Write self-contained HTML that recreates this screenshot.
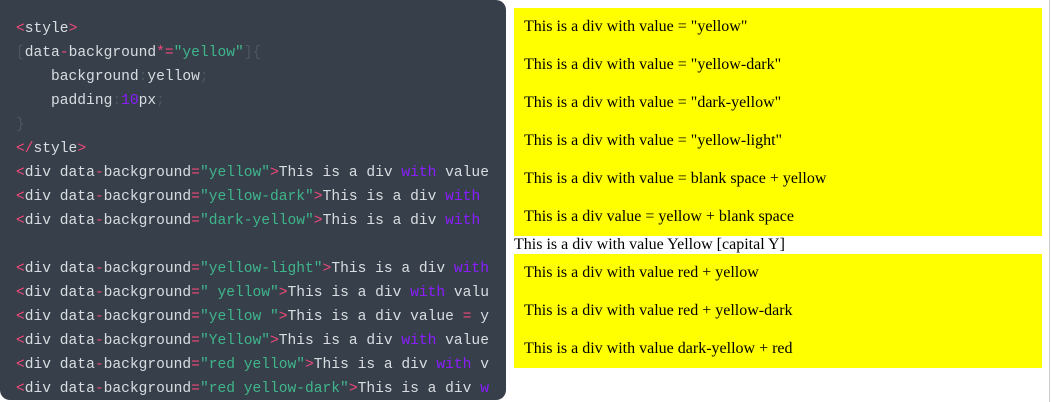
<!DOCTYPE html>
<html><head><style>
body{margin:0;width:1052px;height:402px;background:#fff;position:relative;overflow:hidden}
.code{position:absolute;left:0;top:0;width:506px;height:400px;background:#37404a;border-radius:0 10px 10px 10px;overflow:hidden}
pre{margin:0;position:absolute;left:16px;top:17px;font-family:"Liberation Mono",monospace;font-size:14.6px;line-height:24px;color:#d9dde2;white-space:pre}
.t{color:#f0487a}.s{color:#3fb58b}.k{color:#8a1cff}.d{color:#4d5560}
.right{position:absolute;left:514px;top:8px;width:528px;font-family:"Liberation Serif",serif;font-size:16px;line-height:18px;color:#000}
.y{background:#ff0;padding:10px}
.edge{position:absolute;left:1049px;top:0;width:1px;height:402px;background:#ccc}
</style></head><body>
<div class="code"><pre><span class="t">&lt;</span>style<span class="t">&gt;</span>
<span class="d">[</span>data<span class="t">-</span>background<span class="t">*=</span><span class="s">"yellow"</span><span class="d">]{</span>
    background<span class="d">:</span>yellow<span class="d">;</span>
    padding<span class="d">:</span><span class="k">10</span>px<span class="d">;</span>
<span class="d">}</span>
<span class="t">&lt;/</span>style<span class="t">&gt;</span>
<span class="t">&lt;</span>div data<span class="t">-</span>background<span class="t">=</span><span class="s">"yellow"</span><span class="t">&gt;</span>This is a div <span class="k">with</span> value
<span class="t">&lt;</span>div data<span class="t">-</span>background<span class="t">=</span><span class="s">"yellow-dark"</span><span class="t">&gt;</span>This is a div <span class="k">with</span>
<span class="t">&lt;</span>div data<span class="t">-</span>background<span class="t">=</span><span class="s">"dark-yellow"</span><span class="t">&gt;</span>This is a div <span class="k">with</span>

<span class="t">&lt;</span>div data<span class="t">-</span>background<span class="t">=</span><span class="s">"yellow-light"</span><span class="t">&gt;</span>This is a div <span class="k">with</span>
<span class="t">&lt;</span>div data<span class="t">-</span>background<span class="t">=</span><span class="s">" yellow"</span><span class="t">&gt;</span>This is a div <span class="k">with</span> valu
<span class="t">&lt;</span>div data<span class="t">-</span>background<span class="t">=</span><span class="s">"yellow "</span><span class="t">&gt;</span>This is a div value <span class="t">=</span> y
<span class="t">&lt;</span>div data<span class="t">-</span>background<span class="t">=</span><span class="s">"Yellow"</span><span class="t">&gt;</span>This is a div <span class="k">with</span> value
<span class="t">&lt;</span>div data<span class="t">-</span>background<span class="t">=</span><span class="s">"red yellow"</span><span class="t">&gt;</span>This is a div <span class="k">with</span> v
<span class="t">&lt;</span>div data<span class="t">-</span>background<span class="t">=</span><span class="s">"red yellow-dark"</span><span class="t">&gt;</span>This is a div <span class="k">w</span></pre></div>
<div class="right">
<div class="y">This is a div with value = "yellow"</div>
<div class="y">This is a div with value = "yellow-dark"</div>
<div class="y">This is a div with value = "dark-yellow"</div>
<div class="y">This is a div with value = "yellow-light"</div>
<div class="y">This is a div with value = blank space + yellow</div>
<div class="y">This is a div value = yellow + blank space</div>
<div>This is a div with value Yellow [capital Y]</div>
<div class="y">This is a div with value red + yellow</div>
<div class="y">This is a div with value red + yellow-dark</div>
<div class="y">This is a div with value dark-yellow + red</div>
</div>
<div class="edge"></div>
</body></html>
